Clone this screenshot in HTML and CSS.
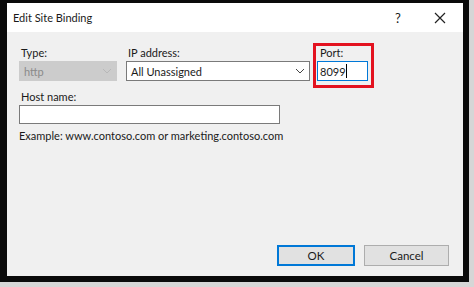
FILE: index.html
```html
<!DOCTYPE html>
<html lang="en">
<head>
  <meta charset="UTF-8">
  <meta name="viewport" content="width=device-width, initial-scale=1.0">
  <title>Edit Site Binding</title>
  <link rel="stylesheet" href="styles.css">
</head>
<body>
  <div class="dialog">
    <div class="title-bar">
      <span class="title">Edit Site Binding</span>
      <span class="title-btn help">?</span>
      <span class="title-btn close">
        <svg width="12" height="12" viewBox="0 0 12 12"><path d="M1 1 L11 11 M11 1 L1 11" stroke="#222" stroke-width="1.2" fill="none"/></svg>
      </span>
    </div>

    <div class="content">
      <div class="field-row">
        <div class="field type-field">
          <label>Type:</label>
          <div class="select disabled">
            <span>http</span>
            <svg class="chevron" width="10" height="6" viewBox="0 0 10 6"><path d="M1 1 L5 5 L9 1" stroke="#b8b8b8" stroke-width="1" fill="none"/></svg>
          </div>
        </div>
        <div class="field ip-field">
          <label>IP address:</label>
          <div class="select">
            <span>All Unassigned</span>
            <svg class="chevron" width="10" height="6" viewBox="0 0 10 6"><path d="M1 1 L5 5 L9 1" stroke="#444" stroke-width="1" fill="none"/></svg>
          </div>
        </div>
        <div class="field port-field highlight">
          <label>Port:</label>
          <div class="input focused">8099<span class="caret"></span></div>
        </div>
      </div>

      <div class="field host-field">
        <label>Host name:</label>
        <div class="input"></div>
      </div>

      <p class="hint">Example: www.contoso.com or marketing.contoso.com</p>

      <div class="buttons">
        <button class="btn default">OK</button>
        <button class="btn">Cancel</button>
      </div>
    </div>
  </div>
</body>
</html>
```

FILE: styles.css
```css
:root {
  --frame-color: #0a0a0a;
  --body-color: #f0f0f0;
  --text-color: #1a1a1a;
  --field-border: #7a7a7a;
  --focus-color: #0078d7;
  --highlight-color: #e3121f;
}

body {
  margin: 0;
  background-color: #d6d6d6;
  font-family: Lato, "Liberation Sans", Arial, sans-serif;
  font-size: 11px;
  color: var(--text-color);
}

.dialog {
  width: 456px;
  height: 273px;
  border-style: solid;
  border-color: var(--frame-color);
  border-width: 3px 6px 6px 7px;
  background-color: var(--body-color);
  display: flex;
  flex-direction: column;
}

.title-bar {
  height: 29px;
  background-color: #fff;
  display: flex;
  align-items: center;
  padding-left: 6px;
}

.title {
  flex: 1;
}

.title-btn {
  width: 38px;
  display: flex;
  justify-content: center;
}

.help {
  font-size: 13px;
}

.close {
  width: 46px;
}

.content {
  flex: 1;
  display: flex;
  flex-direction: column;
  padding: 11px 14px 10px 12px;
}

.field-row {
  display: flex;
  align-items: flex-start;
}

.field {
  display: flex;
  flex-direction: column;
}

.field label {
  height: 14px;
  line-height: 14px;
  margin-bottom: 1px;
  padding-left: 2px;
}

.type-field,
.ip-field {
  margin-top: 3px;
}

.type-field {
  width: 98px;
  margin-right: 9px;
}

.ip-field {
  width: 184px;
  margin-right: 3px;
}

.select,
.input {
  height: 18px;
  border: 1px solid var(--field-border);
  background-color: #fff;
  display: flex;
  align-items: center;
  padding: 0 4px;
}

.select span {
  flex: 1;
}

.select.disabled {
  background-color: #cccccc;
  border-color: #cccccc;
  color: #8a8a8a;
}

.highlight {
  border: 3px solid var(--highlight-color);
  padding: 0 3px 4px 1px;
  width: 51px;
}

.port-field label {
  padding-left: 3px;
}

.input.focused {
  border-color: var(--focus-color);
  padding-left: 2px;
}

.caret {
  display: inline-block;
  width: 1px;
  height: 14px;
  background-color: #000;
}

.host-field {
  margin-top: 2px;
  width: 261px;
}

.host-field .input {
  height: 17px;
}

.hint {
  margin: 5px 0 0 0;
  line-height: 14px;
}

.buttons {
  margin-top: auto;
  display: flex;
  justify-content: flex-end;
  gap: 9px;
}

.btn {
  height: 21px;
  font-family: inherit;
  font-size: 11.5px;
  color: var(--text-color);
  background-color: #e1e1e1;
  border: 1px solid #adadad;
  padding: 0;
}

.btn.default {
  width: 78px;
  border: 2px solid var(--focus-color);
}

.btn:last-child {
  width: 85px;
}
```
